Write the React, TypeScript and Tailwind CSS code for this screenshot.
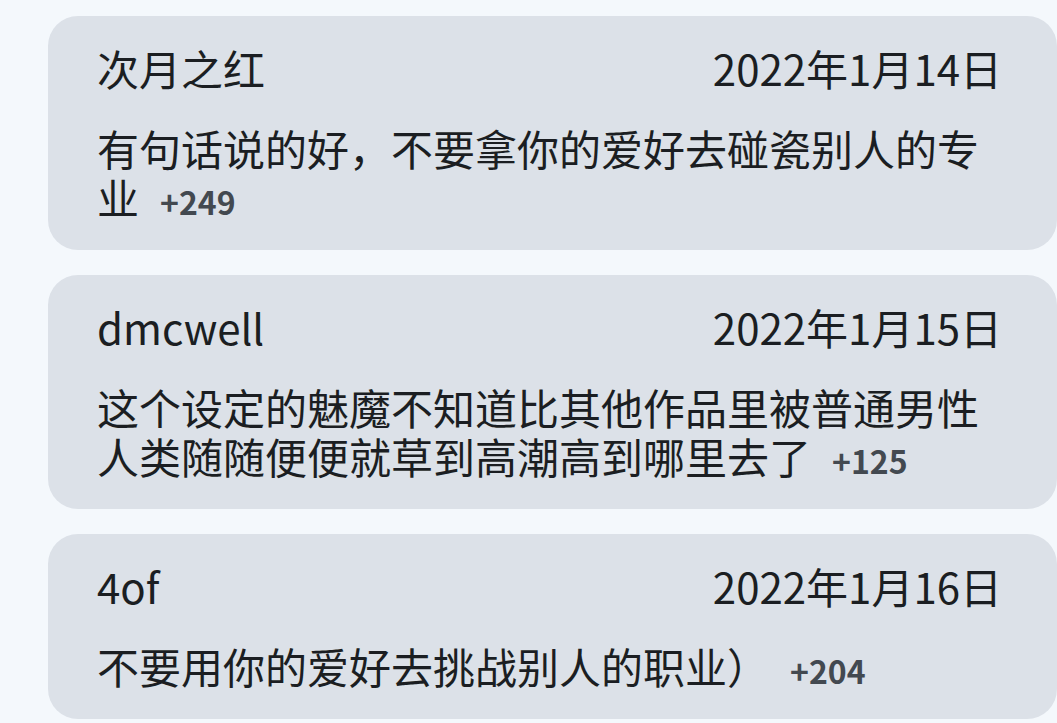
const comments = [
  {
    name: "次月之红",
    date: "2022年1月14日",
    text: "有句话说的好，不要拿你的爱好去碰瓷别人的专业",
    count: "+249",
  },
  {
    name: "dmcwell",
    date: "2022年1月15日",
    text: "这个设定的魅魔不知道比其他作品里被普通男性人类随随便便就草到高潮高到哪里去了",
    count: "+125",
  },
  {
    name: "4of",
    date: "2022年1月16日",
    text: "不要用你的爱好去挑战别人的职业）",
    count: "+204",
  },
];

const CommentCard = ({ name, date, text, count }: (typeof comments)[number]) => {
  return (
    <div className="ml-[48px] rounded-[30px] bg-[#dce1e8] pl-[49px] pr-[55px] pt-[27px] pb-[29px]">
      <div className="flex justify-between items-center h-[49px] text-[42px] leading-[49px] text-[#1b1e22]">
        <span>{name}</span>
        <span>{date}</span>
      </div>
      <p className="mt-[31px] text-[42px] leading-[49px] text-[#1b1e22]">
        {text}
        <span className="ml-[21px] text-[32px] leading-none font-bold text-[#434950]">{count}</span>
      </p>
    </div>
  );
};

export default function App() {
  return (
    <div
      className="min-h-[723px] w-[1057px] overflow-hidden bg-[#f4f8fc] pt-[16px] flex flex-col gap-[25px]"
      style={{ fontFamily: '"Noto Sans CJK SC", "Noto Sans", sans-serif' }}
    >
      {comments.map((c) => (
        <CommentCard key={c.date} {...c} />
      ))}
    </div>
  );
}
